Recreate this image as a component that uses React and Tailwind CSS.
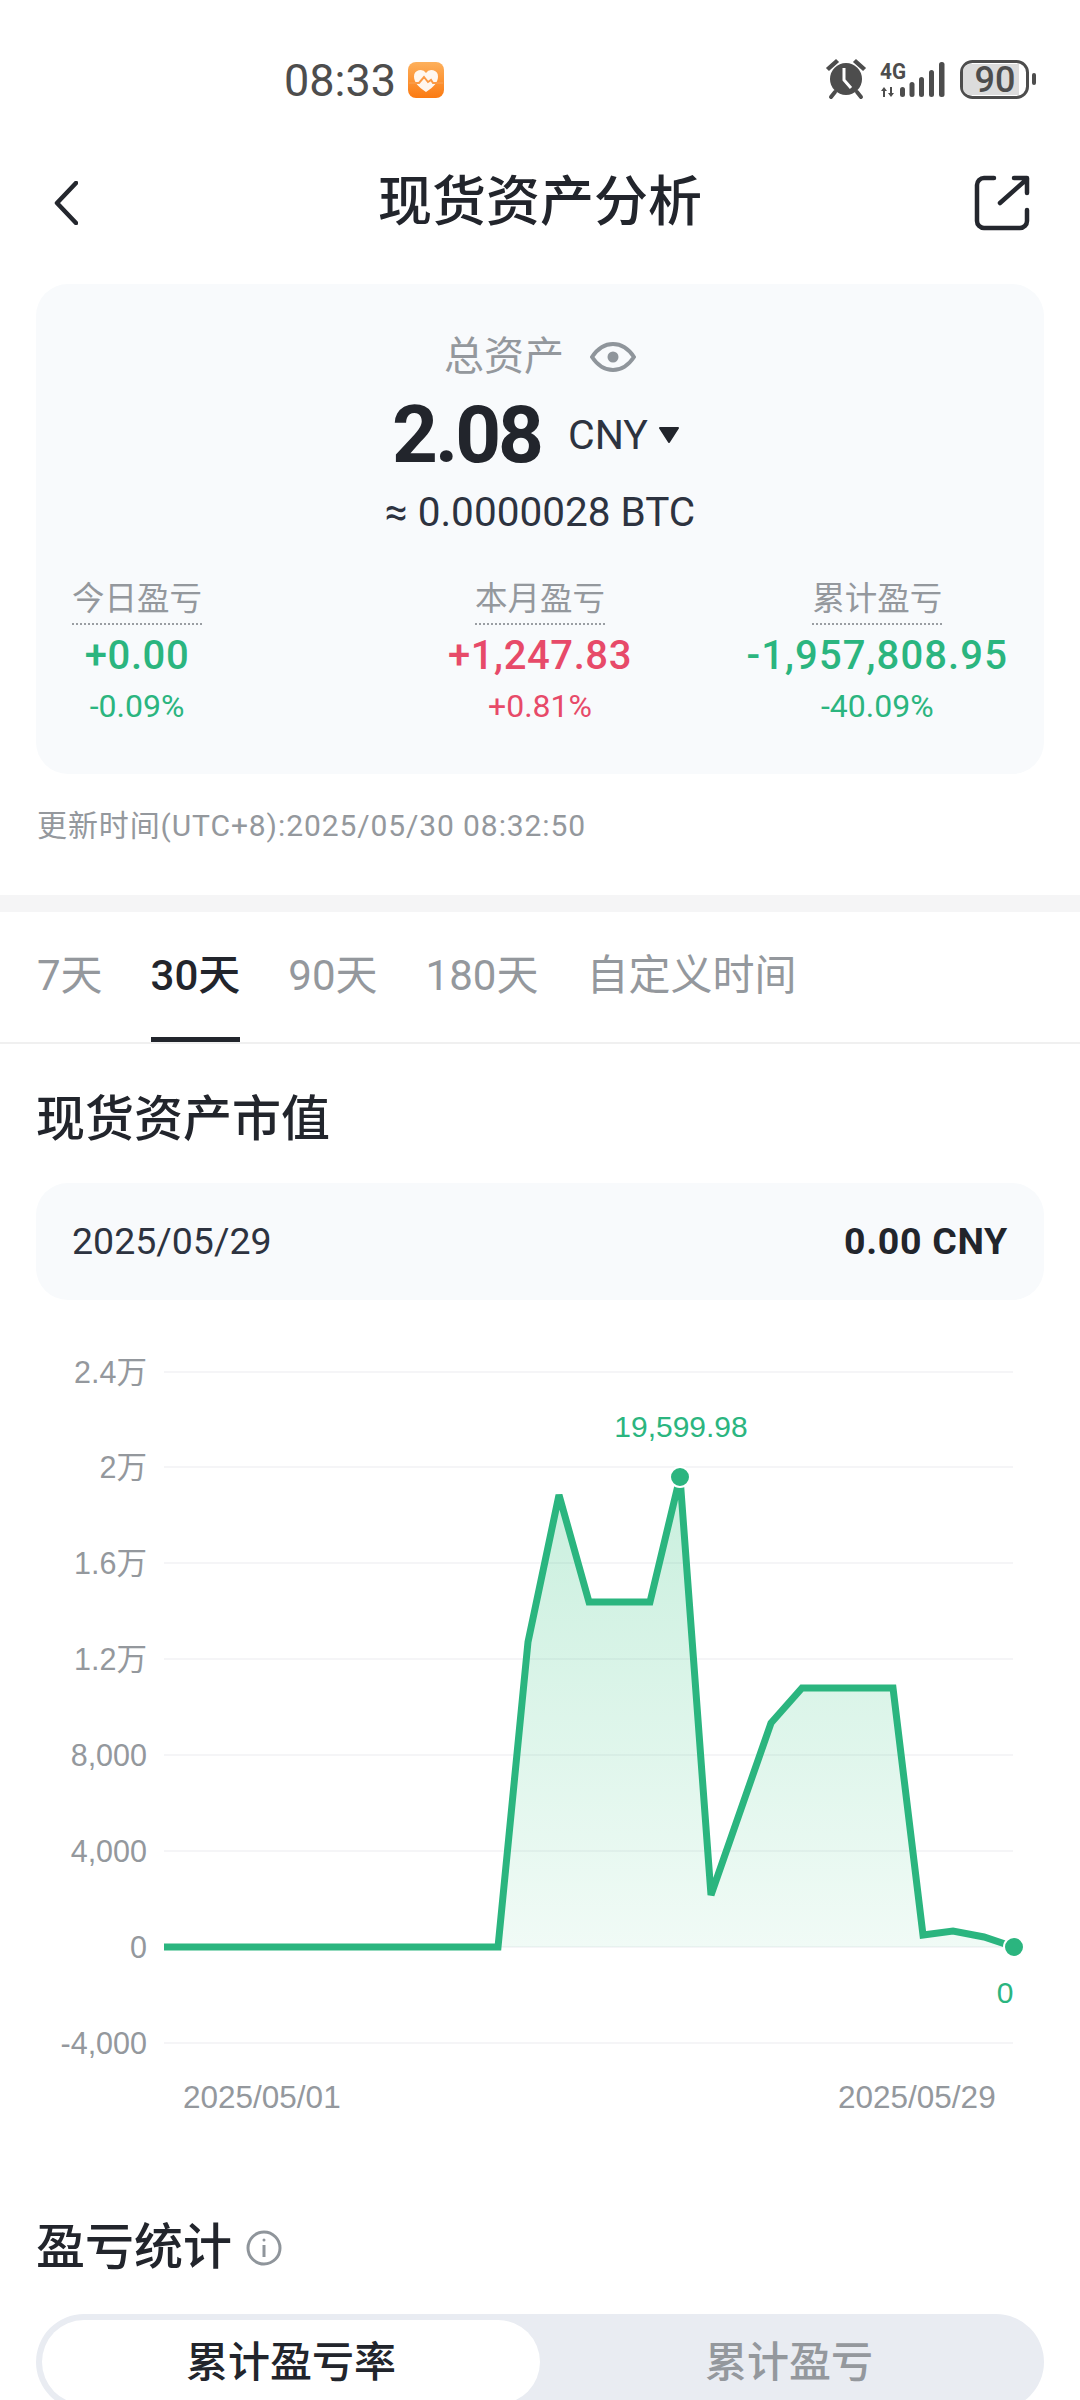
const GREEN = "#2bb57f";

const points = [
  [164, 1947], [498, 1947], [528, 1642], [559, 1495], [589, 1602], [650, 1602], [680, 1477],
  [711, 1895], [771, 1723], [802, 1688], [893, 1688], [923, 1935], [953, 1931], [984, 1937], [1014, 1947],
];
const linePoints = points.map((p) => p.join(",")).join(" ");

const yLabels = [
  ["2.4万", 1372], ["2万", 1467], ["1.6万", 1563], ["1.2万", 1659],
  ["8,000", 1755], ["4,000", 1851], ["0", 1947], ["-4,000", 2043],
];

const tabs = ["7天", "30天", "90天", "180天", "自定义时间"];

const stats = [
  { label: "今日盈亏", value: "+0.00", pct: "-0.09%", color: "text-[#2bb57f]", spacing: "tracking-[0.6px]" },
  { label: "本月盈亏", value: "+1,247.83", pct: "+0.81%", color: "text-[#e74a69]", spacing: "tracking-[0.6px]" },
  { label: "累计盈亏", value: "-1,957,808.95", pct: "-40.09%", color: "text-[#2bb57f]", spacing: "tracking-[1.100px]" },
];

const Stat = ({ label, value, pct, color, spacing }) => (
  <div className="flex flex-col items-center">
    <span className="h-[48px] border-b-2 border-dotted border-[#9a9ea3] text-[32.500px] leading-[44px] text-[#94989d]">
      {label}
    </span>
    <span className={`mt-[6px] h-[50px] whitespace-nowrap text-[40px] leading-[50px] font-medium ${spacing} ${color}`}>
      {value}
    </span>
    <span className={`mt-[5px] whitespace-nowrap text-[32px] leading-[40px] ${color}`}>{pct}</span>
  </div>
);

const StatusIcons = () => (
  <svg width="220" height="44" viewBox="825 58 220 44" className="block">
    <g fill="#4d4d4d">
      <circle cx="848" cy="79" r="16" />
      <path d="M831 70l9-8-2-2-9 8zM865 70l-9-8 2-2 9 8z" stroke="#4d4d4d" strokeWidth="1.500" />
      <path d="M837 92l-4 5M859 92l4 5" stroke="#4d4d4d" strokeWidth="4" strokeLinecap="round" />
      <path d="M846 68v12l7 8" stroke="#fff" strokeWidth="3" fill="none" />
      <text x="882" y="79" fontSize="22" fontWeight="700" fontFamily="Roboto" textLength="26" lengthAdjust="spacingAndGlyphs">4G</text>
      <path d="M886 87l3 4h-2v6h-2v-6h-2zM893 97l-3-4h2v-6h2v6h2z" />
      <rect x="902" y="87" width="5" height="10" rx="2.5" />
      <rect x="911.5" y="82" width="5" height="15" rx="2.5" />
      <rect x="921" y="77" width="5" height="20" rx="2.5" />
      <rect x="931" y="70" width="5" height="27" rx="2.5" />
      <rect x="941" y="62" width="5.500" height="35" rx="2.5" />
    </g>
    <rect x="963.5" y="61.5" width="66" height="36" rx="11" fill="#fff" stroke="#4d4d4d" strokeWidth="3" />
    <path d="M972 64h49v31h-49a7 7 0 0 1-7-7v-17a7 7 0 0 1 7-7z" fill="#dcdcdc" />
    <text x="997" y="92" textAnchor="middle" fontSize="36" fontWeight="500" fontFamily="Roboto" fill="#4d4d4d">90</text>
    <rect x="1034" y="73" width="4" height="12" rx="2" fill="#4d4d4d" />
  </svg>
);

const HealthIcon = () => (
  <svg width="36" height="36" viewBox="0 0 36 36" className="block">
    <defs>
      <linearGradient id="hg" x1="0" y1="0" x2="0" y2="1">
        <stop offset="0" stopColor="#fdb05c" />
        <stop offset="1" stopColor="#fb7a12" />
      </linearGradient>
    </defs>
    <rect width="36" height="36" rx="8" fill="url(#hg)" />
    <path d="M18 30C10 25 6 20 6 14.500a6.500 6.500 0 0 1 12-3.500 6.500 6.500 0 0 1 12 3.500C30 20 26 25 18 30z" fill="#fff" opacity="0.92" />
    <path d="M1 21h10l5-6 4 5 3-2 2 3h10" fill="none" stroke="#fb9a45" strokeWidth="2" />
  </svg>
);

const Chart = () => (
  <svg width="1080" height="917" viewBox="0 1300 1080 917" className="block" fontFamily="'Liberation Sans', 'Noto Sans CJK SC', sans-serif">
    <defs>
      <linearGradient id="area" gradientUnits="userSpaceOnUse" x1="0" y1="1477" x2="0" y2="1947">
        <stop offset="0" stopColor="#2ec27e" stopOpacity="0.26" />
        <stop offset="1" stopColor="#2ec27e" stopOpacity="0.07" />
      </linearGradient>
    </defs>
    {yLabels.map(([text, y]) => (
      <g key={text}>
        <line x1="164" x2="1013" y1={y} y2={y} stroke="#f5f5f7" strokeWidth="2" />
        <text x="147" y={y + 11} textAnchor="end" fontSize="30.500" fill="#94989d">{text}</text>
      </g>
    ))}
    <polygon points={`164,1947 ${linePoints} 1014,1947`} fill="url(#area)" />
    <polyline points={linePoints} fill="none" stroke={GREEN} strokeWidth="7" strokeLinejoin="miter" />
    <circle cx="680" cy="1477" r="10" fill={GREEN} stroke="#fff" strokeWidth="2" />
    <circle cx="1014" cy="1947" r="10" fill={GREEN} stroke="#fff" strokeWidth="2" />
    <text x="681" y="1437" textAnchor="middle" fontSize="30" fill={GREEN}>19,599.98</text>
    <text x="1005" y="2003" textAnchor="middle" fontSize="30" fill={GREEN}>0</text>
    <text x="183" y="2108" fontSize="31.500" fill="#94989d">2025/05/01</text>
    <text x="838" y="2108" fontSize="31.500" fill="#94989d">2025/05/29</text>
  </svg>
);

export default function App() {
  return (
    <div className="h-[2400px] w-[1080px] overflow-hidden bg-white font-['Roboto','Noto_Sans_CJK_SC',sans-serif] text-[#22252c]">
      {/* status bar */}
      <div className="flex h-[120px] items-start pt-[58px]">
        <span className="ml-[284px] text-[45px] leading-[45px] text-[#4d4d4d]">08:33</span>
        <div className="ml-[12px] mt-[4px]">
          <HealthIcon />
        </div>
        <div className="ml-[379px]">
          <StatusIcons />
        </div>
      </div>

      {/* nav */}
      <div className="flex h-[164px] items-center justify-between pl-[54px] pr-[50px] pt-[2px]">
        <div className="w-[56px]">
          <svg width="24" height="44" viewBox="0 0 24 44" fill="none" stroke="#24272e" strokeWidth="4.500" strokeLinecap="round" strokeLinejoin="round">
            <path d="M22 2 3 22l19 20" />
          </svg>
        </div>
        <h1 className="ml-[-4px] text-[54px] leading-[64px] font-medium">现货资产分析</h1>
        <svg width="56" height="56" viewBox="0 0 56 56" fill="none" stroke="#24272e" strokeWidth="4.500" strokeLinecap="round" strokeLinejoin="round">
          <path d="M20 3H10a7 7 0 0 0-7 7v36a7 7 0 0 0 7 7h36a7 7 0 0 0 7-7V35" />
          <path d="M26 28 53 4M40 3h13v15" />
        </svg>
      </div>

      {/* summary card */}
      <div className="mx-[36px] flex h-[490px] flex-col items-center rounded-[32px] bg-[#f8fafc] px-[36px] pt-[50px]">
        <div className="flex h-[46px] items-center">
          <span className="text-[40px] leading-[46px] text-[#94989d]">总资产</span>
          <svg className="ml-[26px]" width="46" height="32" viewBox="0 0 46 32" fill="none" stroke="#8f959b" strokeWidth="4">
            <path d="M2 16C8 7 15 3 23 3s15 4 21 13c-6 9-13 13-21 13S8 25 2 16z" />
            <circle cx="23" cy="16" r="5.500" fill="#8f959b" stroke="none" />
          </svg>
        </div>
        <div className="mt-[7px] flex h-[96px] items-center pr-[8px]">
          <span className="text-[80px] leading-[96px] font-bold tracking-[-3px]">2.08</span>
          <span className="ml-[27px] text-[41px] leading-[46px] text-[#2d3340]">CNY</span>
          <svg className="ml-[10px]" width="22" height="16" viewBox="0 0 22 16">
            <path d="M2 1h18l-9 14z" fill="#22252c" stroke="#22252c" strokeWidth="2" strokeLinejoin="round" />
          </svg>
        </div>
        <div className="mt-[6px] h-[46px] text-[40.500px] leading-[46px] text-[#2d3340]">≈ 0.0000028 BTC</div>
        <div className="mt-[42px] flex w-full items-start">
          <div className="flex flex-1 justify-start">
            <Stat {...stats[0]} />
          </div>
          <Stat {...stats[1]} />
          <div className="flex flex-1 justify-end">
            <Stat {...stats[2]} />
          </div>
        </div>
      </div>

      <div className="ml-[37px] mt-[32px] h-[40px] text-[30px] leading-[40px] tracking-[0.9px] text-[#94989d]">
        更新时间(UTC+8):2025/05/30 08:32:50
      </div>

      <div className="mt-[49px] h-[17px] bg-[#f5f5f6]" />

      {/* tabs */}
      <div className="flex h-[132px] gap-[48px] border-b-2 border-[#f0f0f0] pl-[37px]">
        {tabs.map((tab) => (
          <div
            key={tab}
            className={`flex h-[130px] items-center border-b-[5px] pt-[2px] text-[42px] ${
              tab === "30天" ? "border-[#22252c] font-medium text-[#22252c]" : "border-transparent text-[#94989d]"
            }`}
          >
            {tab}
          </div>
        ))}
      </div>

      <h2 className="ml-[36px] mt-[46px] h-[60px] text-[49px] leading-[60px] font-medium">现货资产市值</h2>

      <div className="mx-[36px] mt-[33px] flex h-[117px] items-center justify-between rounded-[32px] bg-[#f8fafc] px-[36px] text-[37.500px]">
        <span className="text-[#2d3340]">2025/05/29</span>
        <span className="font-bold tracking-[0.7px]">0.00 CNY</span>
      </div>

      <Chart />

      <div className="ml-[36px] flex h-[60px] items-center pt-[2px]">
        <h2 className="text-[49px] leading-[60px] font-medium">盈亏统计</h2>
        <svg className="ml-[14px]" width="36" height="36" viewBox="0 0 36 36" fill="none" stroke="#8f959b" strokeWidth="3">
          <circle cx="18" cy="18" r="16" />
          <path d="M18 15v12" />
          <circle cx="18" cy="10" r="1.500" fill="#8f959b" stroke="none" />
        </svg>
      </div>

      <div className="mx-[36px] mt-[37px] flex h-[96px] rounded-full bg-[#e9ecf2] p-[6px]">
        <div className="flex w-[498px] items-center justify-center rounded-full bg-white text-[42px] font-medium">
          累计盈亏率
        </div>
        <div className="flex flex-1 items-center justify-center text-[42px] font-medium text-[#94989d]">累计盈亏</div>
      </div>
    </div>
  );
}
